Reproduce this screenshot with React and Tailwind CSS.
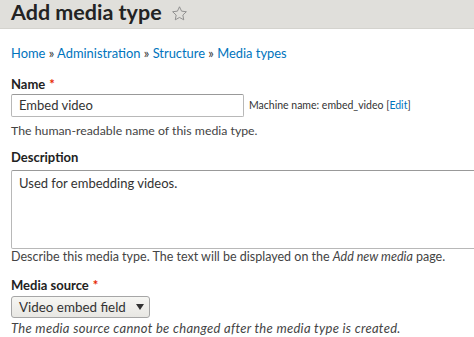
import React from 'react';

function Required() {
  return <span className="ml-[4px] text-[#e62600]">*</span>;
}

export default function App() {
  return (
    <div className="w-[474px] h-[337px] overflow-hidden bg-white text-[#333] font-['Lato',sans-serif]">
      {/* Page title */}
      <div className="h-[29px] bg-[#e0dfdb] border-b border-[#d4d3ce] flex items-center pl-[11px]">
        <h1 className="text-[21.5px] leading-none font-bold text-[#232323] -mt-[2px]">Add media type</h1>
        <svg className="ml-[9px] -mt-[2px]" width="17" height="17" viewBox="0 0 24 24">
          <path
            d="M12 2.5l2.9 6.2 6.8.8-5 4.7 1.3 6.7L12 17.6l-6 3.3 1.3-6.7-5-4.7 6.8-.8z"
            fill="none"
            stroke="#8a8a8a"
            strokeWidth="1.3"
            strokeLinejoin="round"
          />
        </svg>
      </div>

      {/* Breadcrumb */}
      <nav className="mt-[17px] pl-[11px] text-[12.9px] leading-[14px] text-[#0074bd]">
        <a>Home</a> <span className="text-[#333]">»</span> <a>Administration</a>{' '}
        <span className="text-[#333]">»</span> <a>Structure</a> <span className="text-[#333]">»</span>{' '}
        <a>Media types</a>
      </nav>

      <form className="pl-[11px] mt-[17px]">
        {/* Name */}
        <label className="block text-[13px] leading-[14px] font-bold text-[#222]">
          Name<Required />
        </label>
        <div className="mt-[3px] flex items-center">
          <div className="w-[233px] h-[23px] border border-[#b8b8b8] border-t-[#999] rounded-[2px] px-[7px] flex items-center text-[13px] text-[#333]">
            Embed video
          </div>
          <span className="ml-[5px] text-[10.5px] text-[#333]">
            Machine name: embed_video [<a className="text-[#0074bd]">Edit</a>]
          </span>
        </div>
        <p className="mt-[7px] text-[12.3px] leading-[14px] text-[#444]">
          The human-readable name of this media type.
        </p>

        {/* Description */}
        <label className="block mt-[12px] text-[13px] leading-[14px] font-bold text-[#222]">
          Description
        </label>
        <div className="mt-[6px] h-[79px] w-[480px] border border-[#b8b8b8] border-t-[#999] rounded-[2px] px-[7px] pt-[3px] text-[13px] text-[#333]">
          Used for embedding videos.
        </div>
        <p className="mt-[1px] text-[12.5px] leading-[14px] text-[#444]">
          Describe this media type. The text will be displayed on the <em>Add new media</em> page.
        </p>

        {/* Media source */}
        <label className="block mt-[14px] text-[13px] leading-[14px] font-bold text-[#222]">
          Media source<Required />
        </label>
        <div className="mt-[4px] w-[139px] h-[22px] border border-[#a6a6a6] rounded-[3px] bg-gradient-to-b from-[#f6f6f3] to-[#e8e7e3] flex items-center pl-[7px] text-[13.4px] text-[#333]">
          Video embed field
          <svg className="ml-auto mr-[5px]" width="8" height="6" viewBox="0 0 8 6">
            <path d="M0 0h8L4 6z" fill="#333" />
          </svg>
        </div>
        <p className="mt-[3px] text-[13px] leading-[14px] tracking-[0.3px] italic text-[#444]">
          The media source cannot be changed after the media type is created.
        </p>
      </form>
    </div>
  );
}
